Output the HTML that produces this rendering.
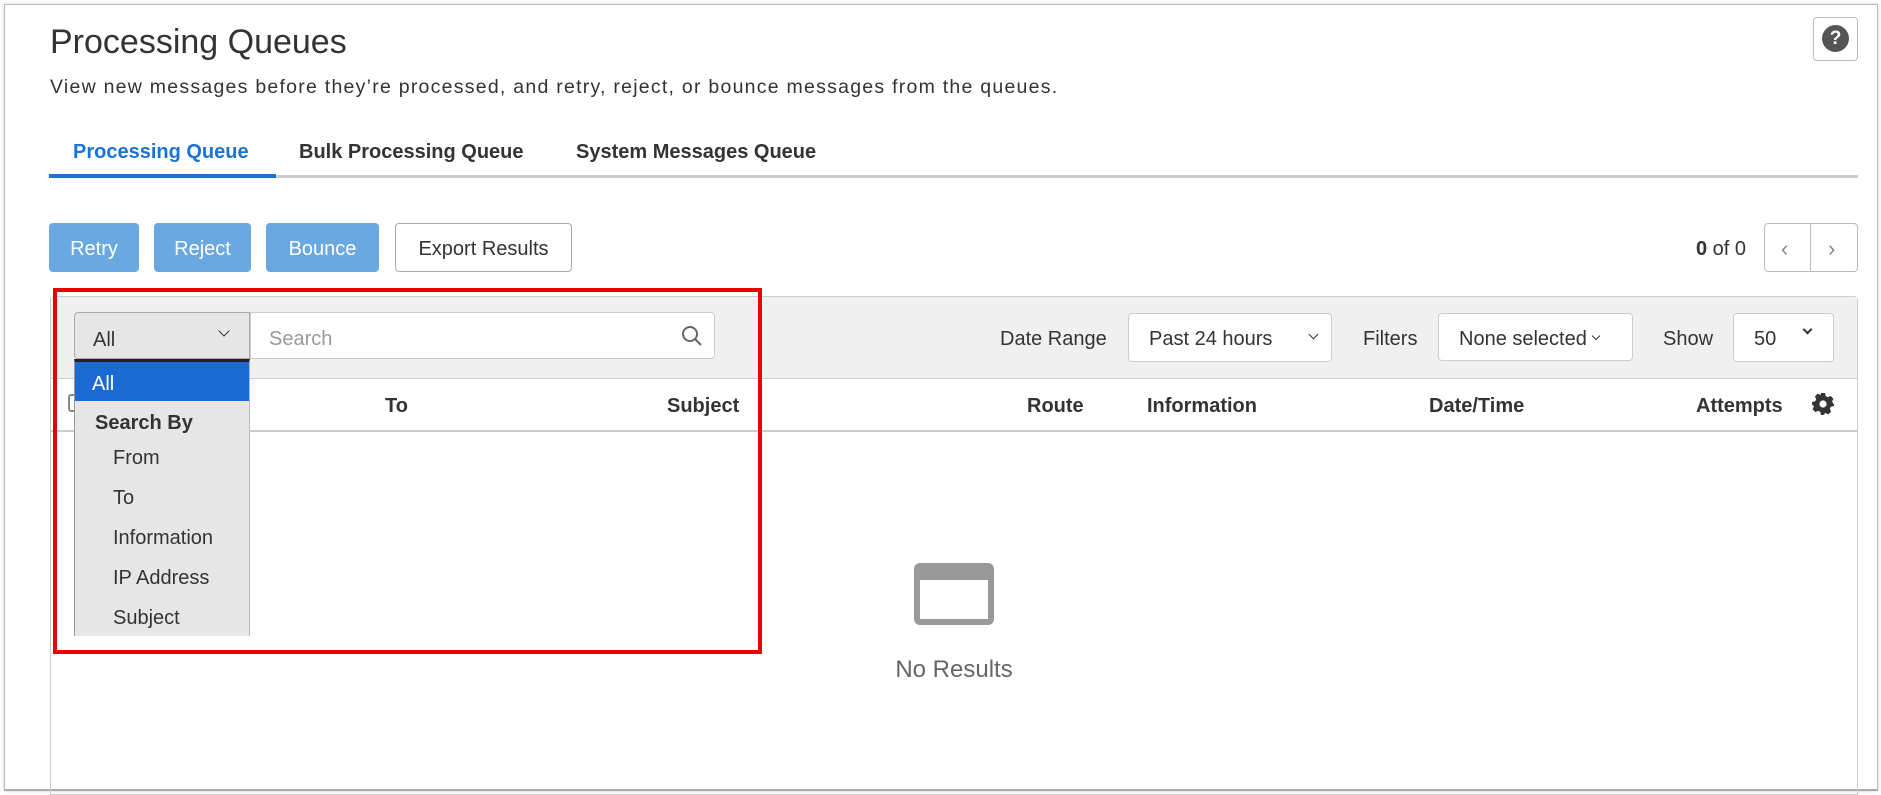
<!DOCTYPE html>
<html><head><style>
*{box-sizing:border-box;margin:0;padding:0}
body{width:1881px;height:795px;background:#fff;font-family:"Liberation Sans",sans-serif;color:#333;position:relative;overflow:hidden}
.a{position:absolute}
.frame{left:4px;top:4px;width:1874px;height:787px;border:1px solid #bbb;border-bottom:2px solid #aaa;box-shadow:0 0 3px #ccc}
.btn{top:223px;height:49px;border-radius:4px;background:#6aa8e2;color:#fff;font-size:20px;display:flex;align-items:center;justify-content:center;padding-top:4px}
.sel{background:#fff;border:1px solid #ccc;border-radius:4px;font-size:20px;display:flex;align-items:center;padding-left:20px;padding-top:4px}
.th{top:395px;font-size:20px;font-weight:bold;color:#333}
.dd{left:113px;font-size:20px;color:#333}
.chev{position:absolute;width:9px;height:9px;border-right:2px solid #333;border-bottom:2px solid #333;transform:rotate(45deg)}
</style></head><body>
<div class="a frame"></div>
<div class="a" style="left:50px;top:23px;font-size:34px;color:#333">Processing Queues</div>
<div class="a" style="left:50px;top:76px;font-size:19.5px;letter-spacing:1.25px;color:#333">View new messages before they’re processed, and retry, reject, or bounce messages from the queues.</div>
<div class="a" style="left:1813px;top:17px;width:45px;height:44px;border:1px solid #bbb;border-radius:4px"></div>
<div class="a" style="left:1822px;top:25px;width:27px;height:27px;border-radius:50%;background:#555;color:#fff;font-weight:bold;font-size:19px;text-align:center;line-height:27px">?</div>
<div class="a" style="left:73px;top:141px;font-size:20px;font-weight:bold;color:#1a73d4">Processing Queue</div>
<div class="a" style="left:299px;top:141px;font-size:20px;font-weight:bold;color:#333">Bulk Processing Queue</div>
<div class="a" style="left:576px;top:141px;font-size:20px;font-weight:bold;color:#333">System Messages Queue</div>
<div class="a" style="left:49px;top:175px;width:1809px;height:3px;background:#ccc"></div>
<div class="a" style="left:49px;top:174px;width:227px;height:4px;background:#1a73d4"></div>
<div class="a btn" style="left:49px;width:90px">Retry</div>
<div class="a btn" style="left:154px;width:97px">Reject</div>
<div class="a btn" style="left:266px;width:113px">Bounce</div>
<div class="a btn" style="left:395px;width:177px;background:#fff;color:#333;border:1px solid #aaa">Export Results</div>
<div class="a" style="left:1696px;top:238px;font-size:20px"><b>0</b> of 0</div>
<div class="a" style="left:1764px;top:223px;width:94px;height:49px;border:1px solid #bbb;border-radius:4px"></div>
<div class="a" style="left:1810px;top:224px;width:1px;height:47px;background:#bbb"></div>
<div class="a" style="left:1781px;top:236px;font-size:22px;color:#888">‹</div>
<div class="a" style="left:1828px;top:236px;font-size:22px;color:#888">›</div>
<!-- panel -->
<div class="a" style="left:50px;top:296px;width:1808px;height:499px;border:1px solid #ccc;border-radius:4px 4px 0 0"></div>
<div class="a" style="left:51px;top:297px;width:1806px;height:82px;background:#f0f0f0;border-bottom:1px solid #ccc"></div>
<div class="a" style="left:74px;top:312px;width:176px;height:47px;background:#e6e6e6;border:1px solid #aaa;border-radius:4px 0 0 4px;font-size:20px;padding:16px 0 0 18px">All<span class="chev" style="left:145px;top:14px;width:8px;height:8px;border-width:1.5px"></span></div>
<div class="a" style="left:250px;top:312px;width:465px;height:47px;background:#fff;border:1px solid #ccc;border-radius:0 4px 4px 0;font-size:20px;color:#999;padding:15px 0 0 18px">Search</div>
<svg class="a" style="left:680px;top:324px" width="24" height="24" viewBox="0 0 24 24"><circle cx="10" cy="10" r="7" fill="none" stroke="#666" stroke-width="2"/><path d="M15 15l6 6" stroke="#666" stroke-width="2"/></svg>
<div class="a" style="left:1000px;top:328px;font-size:20px">Date Range</div>
<div class="a sel" style="left:1128px;top:313px;width:204px;height:49px">Past 24 hours<span class="chev" style="right:14px;top:17px;width:7px;height:7px;border-width:1.5px"></span></div>
<div class="a" style="left:1363px;top:328px;font-size:20px">Filters</div>
<div class="a sel" style="left:1438px;top:313px;width:195px;height:48px">None selected<span class="chev" style="position:relative;display:inline-block;margin-left:6px;top:-3px;width:6px;height:6px;border-width:1.5px"></span></div>
<div class="a" style="left:1663px;top:328px;font-size:20px">Show</div>
<div class="a sel" style="left:1733px;top:313px;width:101px;height:49px">50<span class="chev" style="right:22px;top:12px;width:7px;height:7px;border-width:2px"></span></div>
<div class="a" style="left:51px;top:430px;width:1806px;height:2px;background:#ccc"></div>
<div class="a" style="left:68px;top:394px;width:14px;height:18px;border:2px solid #888;border-radius:3px"></div>
<div class="a th" style="left:385px">To</div>
<div class="a th" style="left:667px">Subject</div>
<div class="a th" style="left:1027px">Route</div>
<div class="a th" style="left:1147px">Information</div>
<div class="a th" style="left:1429px">Date/Time</div>
<div class="a th" style="left:1696px">Attempts</div>
<svg class="a" style="left:1811px;top:392px" width="24" height="24" viewBox="0 0 24 24"><path fill="#333" d="M10 1h4l.6 3 2.2 1.2 2.8-1.3 2.8 2.8-1.3 2.8L22.3 11.7l0 .6L23 12v0l0 2-3 .6-1.2 2.2 1.3 2.8-2.8 2.8-2.8-1.3-2.2 1.2L14 23h-4l-.6-3-2.2-1.2-2.8 1.3-2.8-2.8 1.3-2.8L1.7 12.3 1 14v-4l3-.6 1.2-2.2-1.3-2.8 2.8-2.8 2.8 1.3L9.4 4z"/><circle cx="12" cy="12" r="3.6" fill="#fff"/></svg>
<!-- empty -->
<div class="a" style="left:914px;top:563px;width:80px;height:62px;border:6px solid #999;border-top-width:17px;border-radius:6px"></div>
<div class="a" style="left:854px;top:656px;width:200px;text-align:center;font-size:24px;color:#666">No Results</div>
<!-- dropdown -->
<div class="a" style="left:74px;top:359px;width:176px;height:277px;background:#e6e6e6;border-left:1px solid #999;border-right:1px solid #bbb;border-top:3px solid #222"></div>
<div class="a" style="left:75px;top:362px;width:174px;height:39px;background:#1b6ad4;color:#fff;font-size:20px;padding:11px 0 0 17px">All</div>
<div class="a" style="left:95px;top:412px;font-size:20px;font-weight:bold">Search By</div>
<div class="a dd" style="top:447px">From</div>
<div class="a dd" style="top:487px">To</div>
<div class="a dd" style="top:527px">Information</div>
<div class="a dd" style="top:567px">IP Address</div>
<div class="a dd" style="top:607px">Subject</div>
<div class="a" style="left:53px;top:288px;width:709px;height:366px;border:4px solid #e00"></div>
</body></html>
